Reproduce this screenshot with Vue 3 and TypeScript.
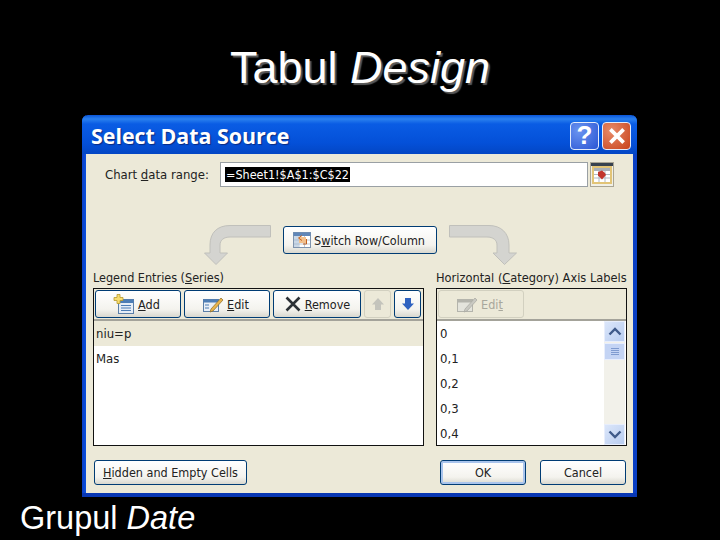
<script setup lang="ts">
const values: string[] = ['0', '0,1', '0,2', '0,3', '0,4']
</script>

<template>
  <main class="slide">
    <h1 class="heading">Tabul <em>Design</em></h1>
    <section class="dialog">
      <header class="titlebar">
        <span class="title">Select Data Source</span>
        <span class="caps">
          <span class="cap help">?</span>
          <span class="cap close">
            <svg viewBox="0 0 20 20" width="22" height="22"><path d="M4 4 16 16M16 4 4 16" stroke="#fff" stroke-width="3.4" fill="none" /></svg>
          </span>
        </span>
      </header>
      <div class="body">
        <div class="range">
          <span class="range-label">Chart <u>d</u>ata range:</span>
          <span class="range-input"><span class="selected">=Sheet1!$A$1:$C$22</span></span>
          <span class="range-btn">
            <svg viewBox="0 0 26 25" width="26" height="25">
              <rect x="1.500" y="0.500" width="23" height="24" fill="#f1f0e6" stroke="#a9a594" />
              <rect x="2" y="1" width="22" height="3" fill="#37424e" />
              <path d="M3 4h20v18H3z" fill="#e2c476" />
              <rect x="5" y="6" width="16" height="14" fill="#fff" />
              <rect x="5" y="6" width="16" height="3" fill="#aab0b6" />
              <path d="M5 12.500h16M5 16h16M10 6v14M16 6v14" stroke="#a8b2bc" stroke-width=".9" />
              <path d="M9 10l4-1.500 3 2.500 1 2-4 4.500-4-4z" fill="#c2352c" />
            </svg>
          </span>
        </div>
        <div class="switch-row">
          <svg class="arrow" viewBox="0 0 66 40" width="66" height="40">
            <path d="M65.500.5H25C12 .5 5 8 5 20v8H-.500L11 39.500 22.500 28H15v-8c0-5 4-8 10-8h40.500z" fill="#d4d4d0" stroke="#c0c0bb" />
          </svg>
          <button class="btn switch">
            <svg viewBox="0 0 20 20" width="20" height="20">
              <rect x="1.500" y="2.500" width="17" height="15" fill="#fff" stroke="#7e93ad" />
              <rect x="1.500" y="2.500" width="17" height="3.500" fill="#5f86b8" />
              <rect x="2" y="6" width="4.500" height="11" fill="#c9d7e6" />
              <path d="M2 10h16M2 14h16M7 6v11M12.500 6v11" stroke="#9fb2c8" stroke-width=".7" />
              <rect x="7" y="7" width="7" height="6" fill="#f3c08c" />
              <path d="M10 5.500 6.500 8 10 10.500M14.500 9v5h-3.500" stroke="#c2611f" fill="none" stroke-width="1" />
            </svg>
            <span>S<u>w</u>itch Row/Column</span>
          </button>
          <svg class="arrow" viewBox="0 0 68 40" width="68" height="40">
            <path d="M.5.5H40C52 .5 60 8 60 20v8h7.500L55.500 39.500 44 28h4v-8c0-5-4-8-10-8H.5z" fill="#d4d4d0" stroke="#c0c0bb" />
          </svg>
        </div>
        <div class="panels">
          <div class="col col-left">
            <div class="col-label">Legend Entries (<u>S</u>eries)</div>
            <div class="panel">
              <div class="toolbar">
                <button class="btn tool">
                  <svg viewBox="0 0 22 22" width="22" height="22">
                    <rect x="5.500" y="6.500" width="15" height="14" fill="#e6edf6" stroke="#5a7ea8" />
                    <rect x="5.500" y="6.500" width="15" height="3.500" fill="#4d7db5" />
                    <path d="M8 12.500h10M8 15h10M8 17.500h10" stroke="#4d7db5" />
                    <path d="M4 1.500h3v3h3v3H7v3H4v-3H1v-3h3z" fill="#f7dc6f" stroke="#b79a2c" stroke-width=".8" />
                  </svg>
                  <span class="shift-left"><u>A</u>dd</span>
                </button>
                <button class="btn tool">
                  <svg viewBox="0 0 22 20" width="22" height="20">
                    <rect x="1.500" y="5.500" width="15" height="12" fill="#e9eff6" stroke="#5a7ea8" />
                    <rect x="1.500" y="5.500" width="15" height="3" fill="#4d7db5" />
                    <path d="M3 11h4M3 14h4" stroke="#4d7db5" />
                    <path d="M9 15l10-11 2 2-10 11-3 1z" fill="#e8b44c" stroke="#8a6a2a" stroke-width=".7" />
                  </svg>
                  <span class="shift-left"><u>E</u>dit</span>
                </button>
                <button class="btn tool remove">
                  <svg viewBox="0 0 18 18" width="18" height="18">
                    <path d="M2.500 2.500l13 13M15.500 2.500l-13 13" stroke="#2c3136" stroke-width="2.600" fill="none" />
                  </svg>
                  <span><u>R</u>emove</span>
                </button>
                <button class="btn mini off">
                  <svg viewBox="0 0 14 14" width="14" height="14"><path d="M7 1l6 6.500H10V13H4V7.500H1z" fill="#c4c4bc" /></svg>
                </button>
                <button class="btn mini">
                  <svg viewBox="0 0 14 14" width="14" height="14"><path d="M7 13 1 6.500h3V1h6v5.500h3z" fill="#2f62c0" /></svg>
                </button>
              </div>
              <div class="list">
                <div class="row picked">niu=p</div>
                <div class="row">Mas</div>
              </div>
            </div>
          </div>
          <div class="col col-right">
            <div class="col-label wide">Horizontal (<u>C</u>ategory) Axis Labels</div>
            <div class="panel">
              <div class="toolbar">
                <button class="btn tool off">
                  <svg viewBox="0 0 22 20" width="22" height="20">
                    <rect x="1.500" y="5.500" width="15" height="12" fill="#e4e4dc" stroke="#b4b4ac" />
                    <rect x="1.500" y="5.500" width="15" height="3" fill="#b4b4ac" />
                    <path d="M9 15l10-11 2 2-10 11-3 1z" fill="#c9c9c2" stroke="#a8a8a0" stroke-width=".7" />
                  </svg>
                  <span class="shift-left">Edi<u>t</u></span>
                </button>
              </div>
              <div class="list with-scroll">
                <div class="values">
                  <div v-for="v in values" :key="v" class="row">{{ v }}</div>
                </div>
                <div class="scrollbar">
                  <span class="sb-btn">
                    <svg viewBox="0 0 14 9" width="14" height="9"><path d="M1.500 7.500 7 2l5.500 5.500" stroke="#3f5a8a" stroke-width="2.400" fill="none" /></svg>
                  </span>
                  <span class="sb-thumb"><i></i><i></i><i></i><i></i></span>
                  <span class="sb-track"></span>
                  <span class="sb-btn">
                    <svg viewBox="0 0 14 9" width="14" height="9"><path d="M1.500 1.500 7 7l5.500-5.500" stroke="#3f5a8a" stroke-width="2.400" fill="none" /></svg>
                  </span>
                </div>
              </div>
            </div>
          </div>
        </div>
        <div class="footer">
          <button class="btn hidden-cells"><span><u>H</u>idden and Empty Cells</span></button>
          <div class="actions">
            <button class="btn action default">OK</button>
            <button class="btn action">Cancel</button>
          </div>
        </div>
      </div>
    </section>
    <p class="caption">Grupul <em>Date</em></p>
  </main>
</template>

<style>
html, body { margin: 0; background: #000; }
</style>

<style scoped>
.slide {
  width: 720px;
  height: 540px;
  background: #000;
  overflow: hidden;
  display: flex;
  flex-direction: column;
  font-family: "Liberation Sans", Arial, sans-serif;
  color: #fff;
}
.heading {
  margin: 0;
  height: 115px;
  padding-top: 42px;
  box-sizing: border-box;
  text-align: center;
  font-size: 45px;
  line-height: 52px;
  font-weight: 400;
  text-shadow: 2px 2px 1px #5a5a5a;
}
.dialog {
  margin-left: 82px;
  width: 555px;
  height: 382px;
  box-sizing: border-box;
  display: flex;
  flex-direction: column;
  background: linear-gradient(90deg, #0a3fc4 0, #0a4fe0 4px, transparent 4px, transparent 551px, #0a3fc4 551px);
  border-radius: 6px 6px 0 0;
  border-bottom: 4px solid #0837b4;
  font-family: "DejaVu Sans Condensed", "DejaVu Sans", sans-serif;
  color: #222;
  font-size: 12.500px;
}
.titlebar {
  height: 39px;
  flex: none;
  display: flex;
  align-items: center;
  justify-content: space-between;
  padding: 2px 6px 0 9px;
  box-sizing: border-box;
  border-radius: 6px 6px 0 0;
  background: linear-gradient(180deg, #0a55d8 0, #2a80ee 4px, #0a5ce4 9px, #0450d8 28px, #0346c4 39px);
}
.title {
  font-family: "Open Sans", sans-serif;
  font-weight: 700;
  font-size: 21.400px;
  color: #fff;
  text-shadow: 1px 1px 1px #0a2a80;
}
.caps { display: flex; gap: 3px; }
.cap {
  width: 29px;
  height: 28px;
  box-sizing: border-box;
  border: 1px solid #e4ecfb;
  border-radius: 4px;
  display: flex;
  align-items: center;
  justify-content: center;
  color: #fff;
  font: 700 26px "Liberation Sans", sans-serif;
}
.help { background: radial-gradient(circle at 30% 30%, #6a94f0, #2a55d4); }
.close { background: radial-gradient(circle at 30% 30%, #e88a68, #c8431c); }
.body {
  flex: 1;
  margin: 0 4px;
  background: #ece9d8;
  padding: 8px 6px 8px 7px;
  display: flex;
  flex-direction: column;
  min-height: 0;
}
.range {
  display: flex;
  align-items: center;
  height: 25px;
  margin-left: 12px;
}
.range-label { width: 115px; flex: none; font-size: 13px; }
.range-input {
  width: 368px;
  height: 25px;
  box-sizing: border-box;
  flex: none;
  background: #fff;
  border: 1px solid #9aa0a4;
  display: flex;
  align-items: center;
  padding-left: 4px;
}
.selected { background: #000; color: #fff; padding: 0 1px; line-height: 15px; }
.range-btn { display: flex; margin-left: 1px; }
.switch-row {
  display: flex;
  align-items: flex-start;
  margin: 38px 0 0 112px;
  height: 40px;
}
.arrow { flex: none; overflow: visible; }
.btn {
  box-sizing: border-box;
  border: 1px solid #003c74;
  border-radius: 3px;
  background: linear-gradient(180deg, #fff 0, #f4f3ee 70%, #d9d8cf 100%);
  font: inherit;
  color: #222;
  padding: 0;
  display: flex;
  align-items: center;
  justify-content: center;
  gap: 3px;
}
.switch {
  width: 154px;
  height: 28px;
  margin: 1px 12px 0;
  flex: none;
  gap: 2px;
  padding-right: 3px;
}
.panels {
  display: flex;
  gap: 12px;
  margin-top: 4px;
}
.col { flex: none; }
.col-label { height: 19px; line-height: 18px; white-space: nowrap; }
.wide { font-size: 12.700px; }
.col-left { width: 331px; }
.col-right { width: 191px; }
.panel {
  height: 158px;
  box-sizing: border-box;
  border: 1px solid #111;
  background: #fff;
  display: flex;
  flex-direction: column;
}
.toolbar {
  height: 32px;
  flex: none;
  box-sizing: border-box;
  background: #ece9d8;
  border-bottom: 2px solid #a4a39a;
  padding: 1px;
  display: flex;
  gap: 3px;
}
.tool { width: 86px; height: 28px; }
.shift-left { margin-right: 3px; }
.remove { width: 88px; }
.mini { width: 27px; height: 28px; }
.off { border-color: #d2d0c0; color: #a8a79c; background: #ece9d8; }
.list { flex: 1; min-height: 0; font-size: 13px; }
.row {
  height: 25px;
  line-height: 25px;
  padding-left: 2px;
}
.picked { background: #ece9d8; }
.with-scroll { display: flex; }
.values { flex: 1; padding-left: 1px; }
.scrollbar {
  width: 22px;
  flex: none;
  display: flex;
  flex-direction: column;
  background: #f2f1ea;
  border-right: 1px solid #fff;
  box-sizing: border-box;
}
.sb-btn {
  height: 21px;
  flex: none;
  display: flex;
  align-items: center;
  justify-content: center;
  background: linear-gradient(135deg, #dbe6fa, #b9cdf0);
  border: 1px solid #e8eefc;
  box-sizing: border-box;
}
.sb-thumb {
  height: 17px;
  margin-top: 1px;
  flex: none;
  box-sizing: border-box;
  background: #c4d4f4;
  border: 1px solid #e8eefc;
  display: flex;
  flex-direction: column;
  align-items: center;
  justify-content: center;
  gap: 1px;
}
.sb-thumb i { display: block; width: 8px; height: 1px; background: #7f9bd0; }
.sb-track { flex: 1; }
.footer {
  display: flex;
  justify-content: space-between;
  margin: 14px 1px 0 1px;
}
.hidden-cells { width: 153px; height: 25px; }
.actions { display: flex; gap: 14px; }
.action { width: 86px; height: 25px; }
.default { box-shadow: inset 0 0 0 2px #a9c4ec; }
.caption {
  margin: 0;
  flex: 1;
  padding: 4px 0 0 20px;
  font-size: 32.500px;
  line-height: 34px;
}
</style>
